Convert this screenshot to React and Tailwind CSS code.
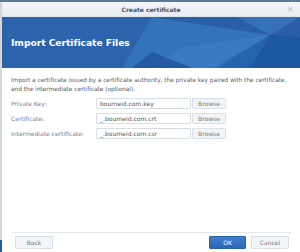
import React from 'react';

function Banner() {
  return (
    <div className="relative h-[51px] bg-[#2d64ad] overflow-hidden">
      {/* faceted background */}
      <svg className="absolute inset-0" width="298" height="51" viewBox="0 0 298 51" preserveAspectRatio="none">
        <polygon points="140,0 298,0 298,20 268,18" fill="#2a5fa8" />
        <polygon points="150,0 268,18 210,51 120,51" fill="#3373bd" />
        <polygon points="268,18 298,20 298,51 248,51" fill="#1f58a2" />
        <polygon points="268,18 248,51 210,51" fill="#2463ae" />
        <polygon points="180,30 268,18 215,51 150,51" fill="#3a80c9" opacity="0.55" />
        <polygon points="235,0 298,0 268,18" fill="#3570b8" />
        <polygon points="0,0 150,0 120,51 0,51" fill="#2d63ac" />
        <polygon points="150,35 190,51 130,51" fill="#2659a3" />
      </svg>
      <div className="relative h-full flex items-center pl-[9px] text-white font-bold text-[9.2px] tracking-[-0.05px]">
        Import Certificate Files
      </div>
    </div>
  );
}

function FileRow({ label, value }) {
  return (
    <div className="flex items-center h-[11px]">
      <div className="w-[85px] text-[6px] text-[#7a838d]">{label}</div>
      <div className="w-[95px] h-[11px] border border-[#d5dde6] bg-white flex items-center px-[3px] text-[6px] text-[#4a545e] rounded-[1px]">
        {value}
      </div>
      <button className="ml-[1px] w-[34px] h-[11px] border border-[#d8e0e8] bg-[#f2f5f8] text-[6px] text-[#707a85] rounded-[1px] flex items-center justify-center">
        Browse
      </button>
    </div>
  );
}

export default function App() {
  return (
    <div className="w-[300px] h-[252px] relative overflow-hidden bg-[#d4d8dd] font-['DejaVu_Sans',sans-serif]">
      <div className="h-[2px] bg-[#5f7896]" />
      <div className="absolute left-0 bottom-0 w-[2px] h-[12px] bg-[#2a5c9c]" />
      <div className="ml-[2px] h-[250px] bg-white flex flex-col">
        {/* Title bar */}
        <div className="relative h-[15px] bg-gradient-to-b from-[#f4f7fa] to-[#e6ecf2] flex items-center justify-center border-b border-[#dfe5ec]">
          <span className="text-[6px] font-bold text-[#3c5570]">Create certificate</span>
          <span className="absolute right-[6px] top-[2px] text-[9px] leading-[10px] text-[#b8bfc6]">×</span>
        </div>

        <Banner />

        <div className="flex-1 px-[9px] pt-[8px] flex flex-col">
          <p className="text-[5.9px] leading-[9px] text-[#58626c] tracking-[-0.05px]">
            Import a certificate issued by a certificate authority, the private key paired with the certificate, and the intermediate certificate (optional).
          </p>
          <div className="mt-[4px] flex flex-col gap-[4px]">
            <FileRow label="Private Key:" value="bourneid.com.key" />
            <FileRow label="Certificate:" value="_.bourneid.com.crt" />
            <FileRow label="Intermediate certificate:" value="_.bourneid.com.csr" />
          </div>
          <div className="flex-1" />
          <div className="border-t border-[#e3e8ee] pt-[3px] pb-[3px] flex items-center pl-[4px] pr-[2px]">
            <button className="w-[38px] h-[13px] border border-[#d8e0e8] bg-[#f2f5f8] text-[6px] text-[#707a85] rounded-[1px]">
              Back
            </button>
            <div className="flex-1" />
            <button className="w-[37px] h-[13px] bg-gradient-to-b from-[#3f7fcd] to-[#2a67b6] border border-[#2a62ad] text-[6px] text-white rounded-[1px]">
              OK
            </button>
            <button className="ml-[5px] w-[38px] h-[13px] border border-[#d8e0e8] bg-[#f2f5f8] text-[6px] text-[#707a85] rounded-[1px]">
              Cancel
            </button>
          </div>
        </div>
      </div>
    </div>
  );
}
